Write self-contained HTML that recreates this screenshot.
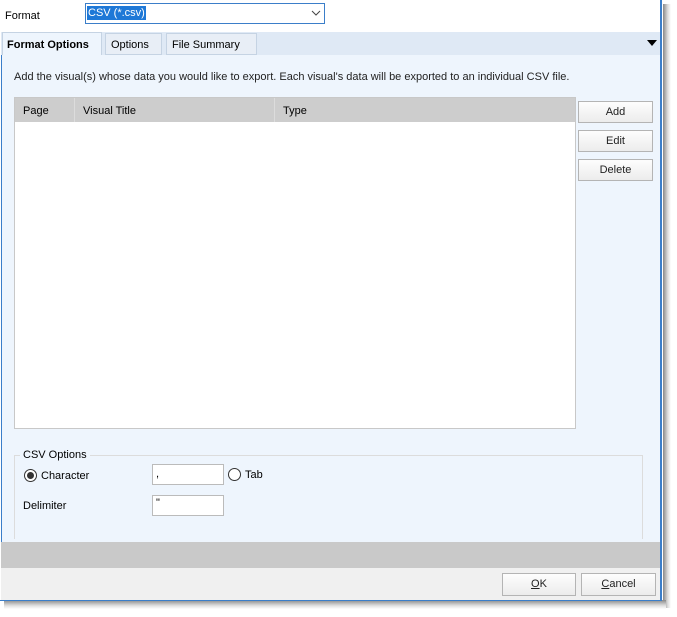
<html><head><style>
body{margin:0;width:677px;height:617px;background:#fff;font-family:"Liberation Sans",sans-serif;font-size:11px;color:#000;position:relative;overflow:hidden}
div{position:absolute;box-sizing:border-box}
.btn{background:linear-gradient(#fdfdfd,#ececec);border:1px solid #b4b4b4;text-align:center;line-height:21px;color:#222}
</style></head><body>
<div style="left:663px;top:4px;width:8px;height:604px;background:linear-gradient(90deg,#888,#ddd 60%,#fff)"></div>
<div style="left:4px;top:600px;width:662px;height:9px;background:linear-gradient(#888,#ddd 60%,#fff)"></div>
<div style="left:0;top:0;width:662px;height:601px;background:#fff;border-right:2px solid #3b7ec9;border-bottom:1px solid #3b7ec9"></div>
<div style="left:5px;top:10px">Format</div>
<div style="left:85px;top:3px;width:240px;height:21px;border:1px solid #3b7ec9;background:#fff"></div>
<div style="left:87px;top:6px;height:14px;background:#1e78d7;color:#fff;padding:0 1px;line-height:14px">CSV (*.csv)</div>
<svg style="position:absolute;left:311px;top:10px" width="10" height="6"><path d="M1 1 L5 5 L9 1" fill="none" stroke="#444" stroke-width="1"/></svg>
<div style="left:1px;top:32px;width:659px;height:23px;background:#dfe9f5"></div>
<div style="left:2px;top:32px;width:100px;height:24px;background:#eef5fd;border:1px solid #c5d3e3;border-bottom:none;font-weight:bold;padding:6px 0 0 4px">Format Options</div>
<div style="left:105px;top:33px;width:57px;height:22px;background:#e8eef6;border:1px solid #c5d3e3;padding:5px 0 0 5px">Options</div>
<div style="left:166px;top:33px;width:91px;height:22px;background:#e8eef6;border:1px solid #c5d3e3;padding:5px 0 0 5px">File Summary</div>
<div style="left:647px;top:40px;width:0;height:0;border-left:5px solid transparent;border-right:5px solid transparent;border-top:6px solid #000"></div>
<div style="left:1px;top:55px;width:659px;height:487px;background:#eef5fd;border-left:1px solid #3b7ec9"></div>
<div style="left:14px;top:71px;color:#222">Add the visual(s) whose data you would like to export. Each visual's data will be exported to an individual CSV file.</div>
<div style="left:14px;top:97px;width:562px;height:332px;background:#fff;border:1px solid #c8c8c8"></div>
<div style="left:15px;top:98px;width:560px;height:24px;background:#cdcdcd"></div>
<div style="left:23px;top:105px">Page</div>
<div style="left:74px;top:98px;width:1px;height:24px;background:#dcdcdc"></div>
<div style="left:83px;top:105px">Visual Title</div>
<div style="left:274px;top:98px;width:1px;height:24px;background:#dcdcdc"></div>
<div style="left:283px;top:105px">Type</div>
<div class="btn" style="left:578px;top:101px;width:75px;height:22px">Add</div>
<div class="btn" style="left:578px;top:130px;width:75px;height:22px">Edit</div>
<div class="btn" style="left:578px;top:159px;width:75px;height:22px">Delete</div>
<div style="left:14px;top:455px;width:629px;height:84px;border:1px solid #dcdcdc;border-bottom:none"></div>
<div style="left:20px;top:449px;background:#eef5fd;padding:0 3px">CSV Options</div>
<div style="left:24px;top:469px;width:13px;height:13px;border:1px solid #333;border-radius:50%;background:#fff"></div>
<div style="left:27px;top:472px;width:7px;height:7px;border-radius:50%;background:#333"></div>
<div style="left:41px;top:470px">Character</div>
<div style="left:152px;top:464px;width:72px;height:21px;border:1px solid #bbb;background:#fff;padding:3px 3px">,</div>
<div style="left:228px;top:468px;width:13px;height:13px;border:1px solid #333;border-radius:50%;background:#fff"></div>
<div style="left:245px;top:469px">Tab</div>
<div style="left:23px;top:500px">Delimiter</div>
<div style="left:152px;top:495px;width:72px;height:21px;border:1px solid #bbb;background:#fff;padding:1px 3px">"</div>
<div style="left:1px;top:542px;width:659px;height:26px;background:#c9c9c9"></div>
<div style="left:1px;top:568px;width:659px;height:32px;background:#f0f0f0"></div>
<div class="btn" style="left:502px;top:573px;width:74px;height:23px"><u>O</u>K</div>
<div class="btn" style="left:581px;top:573px;width:75px;height:23px"><u>C</u>ancel</div>
</body></html>
